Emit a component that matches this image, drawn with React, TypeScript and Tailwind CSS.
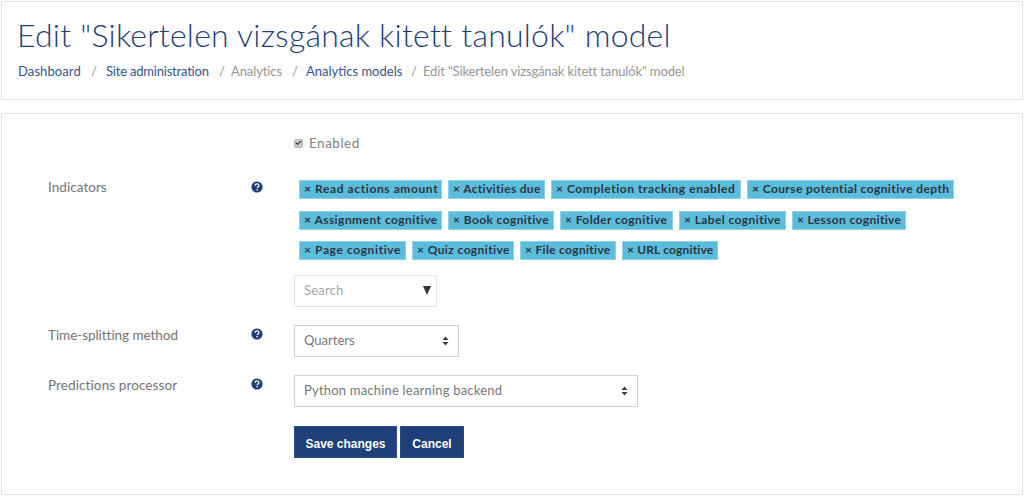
import React from 'react';
import { Check } from 'lucide-react';

const gothic = "font-['Lato','Noto_Sans',sans-serif]";

const crumbs = [
  { label: 'Dashboard', link: true, width: 'w-[63px] tracking-[0.1px]', slash: 'w-[25px] pl-[10px]' },
  { label: 'Site administration', link: true, width: 'w-[103px] tracking-[-0.2px]', slash: 'w-[22px] pl-[10px]' },
  { label: 'Analytics', link: false, width: 'w-[51px] tracking-[-0.1px]', slash: 'w-[24px] pl-[10px]' },
  { label: 'Analytics models', link: true, width: 'w-[96px] tracking-[0px]', slash: 'w-[21px] pl-[9px]' },
];

const indicatorRows = [
  [
    { name: 'Read actions amount', width: 'w-[143px] tracking-[0.6px]' },
    { name: 'Activities due', width: 'w-[97px] tracking-[0.33px]' },
    { name: 'Completion tracking enabled', width: 'w-[190px] tracking-[0.55px]' },
    { name: 'Course potential cognitive depth', width: 'w-[207px] tracking-[0.4px]' },
  ],
  [
    { name: 'Assignment cognitive', width: 'w-[143px] tracking-[0.45px]' },
    { name: 'Book cognitive', width: 'w-[106px] tracking-[0.4px]' },
    { name: 'Folder cognitive', width: 'w-[113px] tracking-[0.4px]' },
    { name: 'Label cognitive', width: 'w-[107px] tracking-[0.4px]' },
    { name: 'Lesson cognitive', width: 'w-[114px] tracking-[0.35px]' },
  ],
  [
    { name: 'Page cognitive', width: 'w-[107px] tracking-[0.6px]' },
    { name: 'Quiz cognitive', width: 'w-[102px] tracking-[0.4px]' },
    { name: 'File cognitive', width: 'w-[96px] tracking-[0.3px]' },
    { name: 'URL cognitive', width: 'w-[96px] tracking-[0.15px]' },
  ],
];

const HelpIcon = () => (
  <svg width="12" height="12" viewBox="0 0 12 12" className="block">
    <circle cx="6" cy="6" r="5.6" fill="#1d4078" />
    <path d="M4.1 4.6c.1-1.1.9-1.7 1.95-1.7 1.1 0 1.9.7 1.9 1.6 0 .8-.5 1.1-1 1.45-.4.3-.6.45-.6.95" fill="none" stroke="#fff" strokeWidth="1.35" />
    <rect x="5.4" y="7.9" width="1.4" height="1.4" fill="#fff" />
  </svg>
);

const SortIcon = () => (
  <svg width="7" height="10" viewBox="0 0 7 10" className="block">
    <path d="M3.5 0.5 L6.5 4 H0.5 Z M3.5 9.5 L0.5 6 H6.5 Z" fill="#3a3f45" />
  </svg>
);

const Label = ({ text, spacing }: { text: string; spacing: string }) => (
  <div className={`w-[249px] pl-[46px] text-[13.5px] leading-[20px] text-[#727578] ${spacing}`}>{text}</div>
);

const App: React.FC = () => {
  return (
    <div className={`${gothic} w-[1024px] h-[496px] bg-white p-px overflow-hidden`}>
      <header className="h-[99px] border border-[#e3e3e3] pl-[15px] pt-[15px]">
        <h1 className="text-[32px] leading-[36px] font-light text-[#1d4078] tracking-[0.23px] whitespace-nowrap">
          Edit "Sikertelen vizsgának kitett tanulók" model
        </h1>
        <nav className="flex items-center mt-[8px] pl-px text-[13px] leading-[20px] whitespace-nowrap">
          {crumbs.map((crumb) => (
            <React.Fragment key={crumb.label}>
              <span className={`${crumb.width} ${crumb.link ? 'text-[#34558c]' : 'text-[#94979a]'}`}>{crumb.label}</span>
              <span className={`${crumb.slash} text-[#94979a]`}>/</span>
            </React.Fragment>
          ))}
          <span className="tracking-[-0.14px] text-[#94979a]">Edit "Sikertelen vizsgának kitett tanulók" model</span>
        </nav>
      </header>

      <main className="mt-[13px] h-[382px] border border-[#e3e3e3] pt-[19px]">
        <div className="flex items-center pl-[292px] h-[20px]">
          <span className="w-[9px] h-[9px] rounded-[2px] bg-[#c9c9c9] border border-[#b5b5b5] flex items-center justify-center">
            <Check size={8} strokeWidth={4} className="text-[#444]" />
          </span>
          <span className="ml-[6px] text-[13.5px] text-[#808285] tracking-[0.5px]">Enabled</span>
        </div>

        <div className="flex mt-[24px]">
          <Label text="Indicators" spacing="tracking-[0.05px]" />
          <div className="w-[43px] pt-[4px]"><HelpIcon /></div>
          <div className="pt-[3px]">
            <div className="flex flex-col gap-[11.5px] pl-[5px]">
              {indicatorRows.map((row, i) => (
                <div key={i} className="flex gap-[6px]">
                  {row.map((item) => (
                    <span key={item.name} className={`${item.width} h-[19px] pl-[4px] bg-[#5bbcdc] border border-[#8fd2e8] text-[#2a3642] text-[12px] leading-[15px] font-bold whitespace-nowrap`}>
                      × {item.name}
                    </span>
                  ))}
                </div>
              ))}
            </div>
            <div className="mt-[14.5px] w-[143px] h-[32px] border border-[#e5e5e5] flex items-center justify-between pl-[9px] pr-[5px] text-[13px] text-[#a4a6a9] tracking-[0.2px]">
              Search
              <span className="w-0 h-0 border-x-[4px] border-t-[9px] border-x-transparent border-t-[#333]" />
            </div>
          </div>
        </div>

        <div className="flex mt-[18px]">
          <Label text="Time-splitting method" spacing="tracking-[-0.05px]" />
          <div className="w-[43px] pt-[3px]"><HelpIcon /></div>
          <div className="w-[165px] h-[32px] border border-[#ced4da] flex items-center justify-between px-[9px] text-[13px] text-[#75787c]">
            Quarters
            <SortIcon />
          </div>
        </div>

        <div className="flex mt-[18px]">
          <Label text="Predictions processor" spacing="tracking-[0.1px]" />
          <div className="w-[43px] pt-[3px]"><HelpIcon /></div>
          <div className="w-[344px] h-[32px] border border-[#ced4da] flex items-center justify-between px-[9px] text-[13px] text-[#75787c] tracking-[0.2px]">
            Python machine learning backend
            <SortIcon />
          </div>
        </div>

        <div className="flex gap-[3px] ml-[292px] mt-[19px] font-['Liberation_Sans',sans-serif] text-[12px] font-bold text-white">
          <button className="w-[103px] h-[32px] pt-[4px] bg-[#1d4078] border border-[#2a5189]">Save changes</button>
          <button className="w-[64px] h-[32px] pt-[4px] bg-[#1d4078] border border-[#2a5189]">Cancel</button>
        </div>
      </main>
    </div>
  );
};

export default App;
